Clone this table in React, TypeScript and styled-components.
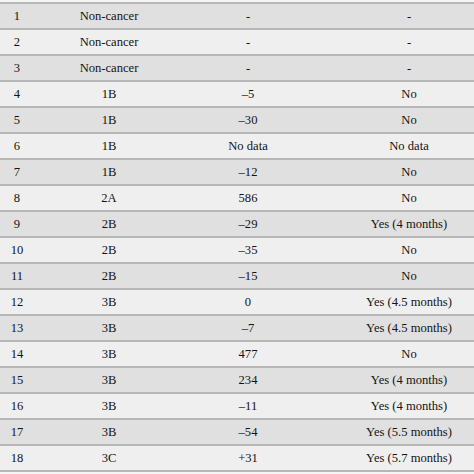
import React from 'react';
import styled, { createGlobalStyle } from 'styled-components';

const GlobalStyle = createGlobalStyle`
  html, body {
    margin: 0;
    padding: 0;
    background: #f5f5f5;
    overflow: hidden;
  }
`;

const Page = styled.div`
  width: 474px;
  height: 474px;
  padding-top: 2px;
  box-sizing: border-box;
  font-family: 'Liberation Serif', 'DejaVu Serif', serif;
  font-size: 12.6px;
  color: #141414;
`;

const Table = styled.div`
  border-bottom: 2px solid #b7b7b7;
`;

const Row = styled.div<{ $shade: boolean }>`
  display: grid;
  grid-template-columns: 34px 150px 128px 1fr;
  height: 24px;
  align-items: center;
  border-top: 2px solid #b7b7b7;
  background: ${(p) => (p.$shade ? '#e0e0e0' : '#efefef')};
`;

const Cell = styled.div<{ $pad?: number }>`
  text-align: center;
  white-space: nowrap;
  padding-left: ${(p) => p.$pad ?? 0}px;
`;

const rows: [string, string, string, string][] = [
  ['1', 'Non-cancer', '-', '-'],
  ['2', 'Non-cancer', '-', '-'],
  ['3', 'Non-cancer', '-', '-'],
  ['4', '1B', '\u20135', 'No'],
  ['5', '1B', '\u201330', 'No'],
  ['6', '1B', 'No data', 'No data'],
  ['7', '1B', '\u201312', 'No'],
  ['8', '2A', '586', 'No'],
  ['9', '2B', '\u201329', 'Yes (4 months)'],
  ['10', '2B', '\u201335', 'No'],
  ['11', '2B', '\u201315', 'No'],
  ['12', '3B', '0', 'Yes (4.5 months)'],
  ['13', '3B', '\u20137', 'Yes (4.5 months)'],
  ['14', '3B', '477', 'No'],
  ['15', '3B', '234', 'Yes (4 months)'],
  ['16', '3B', '\u201311', 'Yes (4 months)'],
  ['17', '3B', '\u201354', 'Yes (5.5 months)'],
  ['18', '3C', '+31', 'Yes (5.7 months)'],
];

export default function App() {
  return (
    <Page>
      <GlobalStyle />
      <Table>
        {rows.map((r, i) => (
          <Row key={r[0]} $shade={i % 2 === 0}>
            <Cell>{r[0]}</Cell>
            <Cell>{r[1]}</Cell>
            <Cell>{r[2]}</Cell>
            <Cell $pad={32}>{r[3]}</Cell>
          </Row>
        ))}
      </Table>
    </Page>
  );
}
